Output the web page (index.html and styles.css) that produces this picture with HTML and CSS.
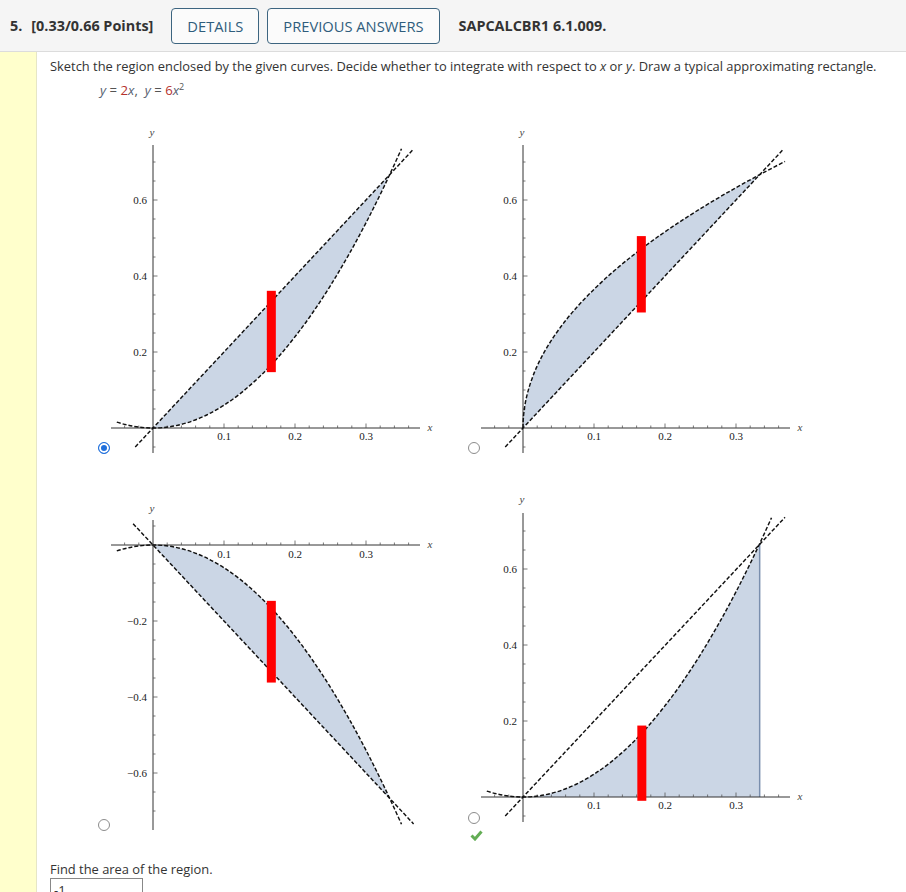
FILE: index.html
```html
<!DOCTYPE html>
<html>
<head>
<meta charset="utf-8">
<link rel="stylesheet" href="styles.css">
</head>
<body>
<header class="qhead">
  <span class="qnum">5.</span>
  <span class="qpoints">[0.33/0.66 Points]</span>
  <button class="qbtn">DETAILS</button>
  <button class="qbtn">PREVIOUS ANSWERS</button>
  <span class="qref">SAPCALCBR1 6.1.009.</span>
</header>
<div class="qmain">
  <div class="gutter"></div>
  <div class="content">
    <p class="prompt">Sketch the region enclosed by the given curves. Decide whether to integrate with respect to <i>x</i> or <i>y</i>. Draw a typical approximating rectangle.</p>
    <p class="eq"><i>y</i> = <span class="num">2</span><i>x</i>,&nbsp; <i>y</i> = <span class="num">6</span><i>x</i><sup>2</sup></p>

    <div class="choices">
      <!-- choice 1 -->
      <div class="choice">
        <div class="pick"><input class="radio" type="radio" name="c" checked></div>
        <svg class="plot" width="330" height="340" viewBox="-43 -310 330 340">
          <path class="fill" d="M0,0L236.67,-253.33Q118.33,0 0,0Z"/>
          <path class="axis" d="M-42,0H267M0,-283V25"/>
          <path class="tick" d="M-28.4,0v-2.5M-14.2,0v-2.5M14.2,0v-2.5M28.4,0v-2.5M42.6,0v-2.5M56.8,0v-2.5M71,0v-4.5M85.2,0v-2.5M99.4,0v-2.5M113.6,0v-2.5M127.8,0v-2.5M142,0v-4.5M156.2,0v-2.5M170.4,0v-2.5M184.6,0v-2.5M198.8,0v-2.5M213,0v-4.5M227.2,0v-2.5M241.4,0v-2.5M255.6,0v-2.5"/>
          <path class="tick" d="M0,19h2.5M0,-19h2.5M0,-38h2.5M0,-57h2.5M0,-76h4.5M0,-95h2.5M0,-114h2.5M0,-133h2.5M0,-152h4.5M0,-171h2.5M0,-190h2.5M0,-209h2.5M0,-228h4.5M0,-247h2.5M0,-266h2.5"/>
          <path class="curve" d="M-17.75,19L259.86,-278.16"/>
          <path class="curve" d="M-36.21,-5.93Q106.15,40.7 248.5,-279.3"/>
          <rect class="strip" x="113.83" y="-137.18" width="9" height="81.32"/>
          <text class="tl" x="71" y="12">0.1</text>
          <text class="tl" x="142" y="12">0.2</text>
          <text class="tl" x="213" y="12">0.3</text>
          <text class="tl end" x="-6" y="-72">0.2</text>
          <text class="tl end" x="-6" y="-148">0.4</text>
          <text class="tl end" x="-6" y="-224">0.6</text>
          <text class="al" x="274.5" y="3">x</text>
          <text class="al mid" x="-1" y="-292">y</text>
        </svg>
      </div>
      <!-- choice 2 -->
      <div class="choice">
        <div class="pick"><input class="radio" type="radio" name="c"></div>
        <svg class="plot" width="330" height="340" viewBox="-43 -310 330 340">
          <path class="fill" d="M0,0L236.67,-253.33Q0,-126.67 0,0Z"/>
          <path class="axis" d="M-42,0H267M0,-283V25"/>
          <path class="tick" d="M-28.4,0v-2.5M-14.2,0v-2.5M14.2,0v-2.5M28.4,0v-2.5M42.6,0v-2.5M56.8,0v-2.5M71,0v-4.5M85.2,0v-2.5M99.4,0v-2.5M113.6,0v-2.5M127.8,0v-2.5M142,0v-4.5M156.2,0v-2.5M170.4,0v-2.5M184.6,0v-2.5M198.8,0v-2.5M213,0v-4.5M227.2,0v-2.5M241.4,0v-2.5M255.6,0v-2.5"/>
          <path class="tick" d="M0,19h2.5M0,-19h2.5M0,-38h2.5M0,-57h2.5M0,-76h4.5M0,-95h2.5M0,-114h2.5M0,-133h2.5M0,-152h4.5M0,-171h2.5M0,-190h2.5M0,-209h2.5M0,-228h4.5M0,-247h2.5M0,-266h2.5"/>
          <path class="curve" d="M-17.75,19L259.86,-278.16"/>
          <path class="curve" d="M0,0Q0,-133.19 261.99,-266.54"/>
          <rect class="strip" x="113.83" y="-191.9" width="9" height="76.38"/>
          <text class="tl" x="71" y="12">0.1</text>
          <text class="tl" x="142" y="12">0.2</text>
          <text class="tl" x="213" y="12">0.3</text>
          <text class="tl end" x="-6" y="-72">0.2</text>
          <text class="tl end" x="-6" y="-148">0.4</text>
          <text class="tl end" x="-6" y="-224">0.6</text>
          <text class="al" x="274.5" y="3">x</text>
          <text class="al mid" x="-1" y="-292">y</text>
        </svg>
      </div>
      <!-- choice 3 -->
      <div class="choice">
        <div class="pick pick-low"><input class="radio" type="radio" name="c"></div>
        <svg class="plot" width="330" height="355" viewBox="-43 -55 330 355">
          <path class="fill" d="M0,0L236.67,253.33Q118.33,0 0,0Z"/>
          <path class="axis" d="M-42,0H267M0,-25V285"/>
          <path class="tick" d="M-28.4,0v-2.5M-14.2,0v-2.5M14.2,0v-2.5M28.4,0v-2.5M42.6,0v-2.5M56.8,0v-2.5M71,0v-4.5M85.2,0v-2.5M99.4,0v-2.5M113.6,0v-2.5M127.8,0v-2.5M142,0v-4.5M156.2,0v-2.5M170.4,0v-2.5M184.6,0v-2.5M198.8,0v-2.5M213,0v-4.5M227.2,0v-2.5M241.4,0v-2.5M255.6,0v-2.5"/>
          <path class="tick" d="M0,-19h2.5M0,19h2.5M0,38h2.5M0,57h2.5M0,76h4.5M0,95h2.5M0,114h2.5M0,133h2.5M0,152h4.5M0,171h2.5M0,190h2.5M0,209h2.5M0,228h4.5M0,247h2.5M0,266h2.5"/>
          <path class="curve" d="M-19.88,-21.28L260.57,278.92"/>
          <path class="curve" d="M-36.21,5.93Q106.15,-40.7 248.5,279.3"/>
          <rect class="strip" x="113.83" y="55.86" width="9" height="81.7"/>
          <text class="tl" x="71" y="12.5">0.1</text>
          <text class="tl" x="142" y="12.5">0.2</text>
          <text class="tl" x="213" y="12.5">0.3</text>
          <text class="tl end" x="-6" y="79.5">−0.2</text>
          <text class="tl end" x="-6" y="155.5">−0.4</text>
          <text class="tl end" x="-6" y="231.5">−0.6</text>
          <text class="al" x="274.5" y="3">x</text>
          <text class="al mid" x="-1" y="-33">y</text>
        </svg>
      </div>
      <!-- choice 4 -->
      <div class="choice">
        <div class="pick">
          <input class="radio" type="radio" name="c">
          <svg class="check" width="13" height="11" viewBox="0 0 13 11"><path d="M1.5,5.5L5,9L11.5,1.5"/></svg>
        </div>
        <svg class="plot" width="330" height="355" viewBox="-43 -307 330 355">
          <path class="fill" d="M0,0Q118.33,0 236.67,-253.33L236.67,0Z"/>
          <path class="edge" d="M236.67,0V-253.33"/>
          <path class="axis" d="M-42,0H267M0,-284V25"/>
          <path class="tick" d="M-28.4,0v-2.5M-14.2,0v-2.5M14.2,0v-2.5M28.4,0v-2.5M42.6,0v-2.5M56.8,0v-2.5M71,0v-4.5M85.2,0v-2.5M99.4,0v-2.5M113.6,0v-2.5M127.8,0v-2.5M142,0v-4.5M156.2,0v-2.5M170.4,0v-2.5M184.6,0v-2.5M198.8,0v-2.5M213,0v-4.5M227.2,0v-2.5M241.4,0v-2.5M255.6,0v-2.5"/>
          <path class="tick" d="M0,19h2.5M0,-19h2.5M0,-38h2.5M0,-57h2.5M0,-76h4.5M0,-95h2.5M0,-114h2.5M0,-133h2.5M0,-152h4.5M0,-171h2.5M0,-190h2.5M0,-209h2.5M0,-228h4.5M0,-247h2.5M0,-266h2.5"/>
          <path class="curve" d="M-17.75,19L261.99,-279.68"/>
          <path class="curve" d="M-36.21,-5.93Q106.15,40.7 248.5,-279.3"/>
          <rect class="strip" x="114.33" y="-71.44" width="9" height="75.24"/>
          <text class="tl" x="71" y="12">0.1</text>
          <text class="tl" x="142" y="12">0.2</text>
          <text class="tl" x="213" y="12">0.3</text>
          <text class="tl end" x="-6" y="-72">0.2</text>
          <text class="tl end" x="-6" y="-148">0.4</text>
          <text class="tl end" x="-6" y="-224">0.6</text>
          <text class="al" x="274.5" y="3">x</text>
          <text class="al mid" x="-1" y="-294">y</text>
        </svg>
      </div>
    </div>

    <p class="find">Find the area of the region.</p>
    <input class="answer" type="text" value="-1">
  </div>
</div>
</body>
</html>
```
FILE: styles.css
```css
html, body {
  margin: 0;
  padding: 0;
}
body {
  font-family: "Open Sans", "Liberation Sans", sans-serif;
  color: #333;
  background: #fff;
  min-height: 100vh;
  display: flex;
  flex-direction: column;
  overflow: hidden;
}
.qhead {
  box-sizing: border-box;
  border-bottom: 1px solid #dcdcdc;
  height: 52px;
  background: #f5f5f5;
  display: flex;
  align-items: center;
  padding-left: 10px;
  font-size: 14.4px;
  flex: none;
}
.qnum {
  font-weight: 700;
  margin-right: 9px;
}
.qpoints {
  font-weight: 700;
  margin-right: 18px;
}
.qbtn {
  height: 36px;
  box-sizing: border-box;
  border: 1px solid #3d6580;
  border-radius: 4px;
  background: #fbfbfb;
  color: #2f5d7c;
  font-family: "Open Sans", "Liberation Sans", sans-serif;
  font-size: 14.7px;
  padding: 0 15px;
  margin: 0 8px 0 0;
  display: flex;
  align-items: center;
}
.qref {
  font-weight: 700;
  margin-left: 11px;
}
.qmain {
  flex: 1;
  display: flex;
}
.gutter {
  width: 36px;
  flex: none;
  background: #ffffcc;
  border-right: 1px solid #e6e6c6;
}
.content {
  flex: 1;
  padding: 6px 0 0 13px;
  font-size: 12.88px;
  line-height: 17px;
}
.prompt {
  margin: 0;
}
.eq {
  margin: 7px 0 0 50px;
  color: #555;
  font-size: 13.2px;
}
.eq i {
  color: #556070;
}
.num {
  color: #b5312c;
}
.eq sup {
  font-size: 9px;
  line-height: 0;
  vertical-align: 5px;
}
.choices {
  display: grid;
  grid-template-columns: 370px 370px;
  row-gap: 32px;
  margin: 19px 0 0 48px;
}
.choice {
  display: flex;
  align-items: flex-end;
}
.pick {
  width: 12px;
  flex: none;
  display: flex;
  flex-direction: column;
  align-items: flex-start;
  gap: 6px;
  margin-bottom: 4px;
}
.pick-low {
  margin-bottom: 14px;
}
.radio {
  appearance: none;
  -webkit-appearance: none;
  width: 12px;
  height: 12px;
  margin: 0;
  box-sizing: border-box;
  border: 1px solid #8c8c8c;
  border-radius: 50%;
  background: #fff;
  display: block;
}
.radio:checked {
  border: 1.5px solid #1f6fdc;
  background: #1f6fdc;
  box-shadow: inset 0 0 0 2px #fff;
}
.check {
  display: block;
  margin-left: 2px;
}
.check path {
  fill: none;
  stroke: #63ad55;
  stroke-width: 3;
}
.plot {
  display: block;
  flex: none;
}
.fill {
  fill: #cbd6e5;
}
.edge {
  fill: none;
  stroke: #7a8fae;
  stroke-width: 1.5;
}
.axis {
  fill: none;
  stroke: #333;
  stroke-width: 1;
}
.tick {
  fill: none;
  stroke: #555;
  stroke-width: 0.8;
}
.curve {
  fill: none;
  stroke: #111;
  stroke-width: 1.45;
  stroke-dasharray: 4 2;
}
.strip {
  fill: #ff0000;
}
.tl {
  font-family: "Liberation Serif", "DejaVu Serif", serif;
  font-size: 11px;
  fill: #222;
  text-anchor: middle;
}
.tl.end {
  text-anchor: end;
}
.al {
  font-family: "Liberation Serif", "DejaVu Serif", serif;
  font-style: italic;
  font-size: 11px;
  fill: #444;
}
.al.mid {
  text-anchor: middle;
}
.find {
  margin: 16px 0 0;
  font-size: 12.9px;
}
.answer {
  display: block;
  width: 93px;
  height: 24px;
  box-sizing: border-box;
  margin: 0;
  border: 1px solid #888;
  padding: 0 3px;
  font-family: "Open Sans", "Liberation Sans", sans-serif;
  font-size: 13px;
  color: #333;
  background: #fff;
}
```
